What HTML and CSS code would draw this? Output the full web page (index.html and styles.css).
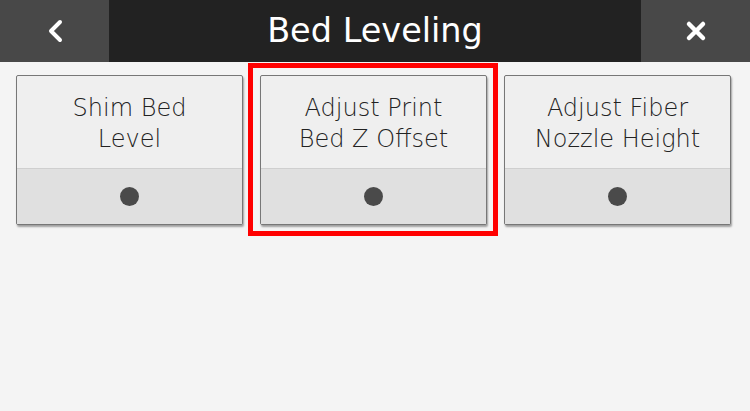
FILE: index.html
```html
<!DOCTYPE html>
<html lang="en">
<head>
    <meta charset="UTF-8">
    <meta name="viewport" content="width=device-width, initial-scale=1.0">
    <title>Bed Leveling</title>
    <link rel="stylesheet" href="styles.css">
</head>
<body>
<div class="header">
    <button type="button" class="header-button">
        <svg width="20" height="24" viewBox="0 0 20 24">
            <path d="M15 3 L6 12 L15 21" fill="none" stroke="#fff" stroke-width="4" stroke-linecap="round" stroke-linejoin="round"/>
        </svg>
    </button>
    <h1 class="title">Bed Leveling</h1>
    <button type="button" class="header-button">
        <svg width="22" height="22" viewBox="0 0 22 22">
            <path d="M4 4 L18 18 M18 4 L4 18" fill="none" stroke="#fff" stroke-width="4.5" stroke-linecap="round"/>
        </svg>
    </button>
</div>

<div class="menu">
    <div class="card">
        <div class="card-label">Shim Bed<br>Level</div>
        <div class="card-status"><span class="dot"></span></div>
    </div>
    <div class="card selected">
        <div class="card-label">Adjust Print<br>Bed Z Offset</div>
        <div class="card-status"><span class="dot"></span></div>
    </div>
    <div class="card">
        <div class="card-label">Adjust Fiber<br>Nozzle Height</div>
        <div class="card-status"><span class="dot"></span></div>
    </div>
</div>
</body>
</html>
```

FILE: styles.css
```css
/* Bed leveling menu */
body {
    font-family: "DejaVu Sans", sans-serif;
    background-color: #f4f4f4;
    margin: 0;
    padding: 0;
    width: 750px;
    height: 411px;
    overflow: hidden;
}
.header {
    display: flex;
    height: 62px;
    background-color: #222;
}
.header-button {
    width: 109px;
    height: 62px;
    border: none;
    padding: 0;
    background-color: #484848;
    display: flex;
    justify-content: center;
    align-items: center;
    cursor: pointer;
}
.title {
    flex: 1;
    margin: 0;
    color: #fff;
    font-size: 33.5px;
    font-weight: normal;
    line-height: 62px;
    text-align: center;
}
.menu {
    display: grid;
    grid-template-columns: repeat(3, 227px);
    column-gap: 17px;
    padding: 13px 19px 0 16px;
}
.card {
    height: 150px;
    box-sizing: border-box;
    border: 1px solid #777;
    border-radius: 2px;
    box-shadow: 1px 2px 2px rgba(0, 0, 0, 0.35);
    background-color: #efefef;
    display: flex;
    flex-direction: column;
}
.card.selected {
    position: relative;
}
/* red focus frame drawn over the page around the chosen card */
.card.selected::after {
    content: "";
    position: absolute;
    top: -13px;
    left: -13px;
    right: -12px;
    bottom: -12px;
    border: 5px solid #f00;
}
.card-label {
    height: 93px;
    box-sizing: border-box;
    padding-top: 3px;
    display: flex;
    justify-content: center;
    align-items: center;
    text-align: center;
    color: #222;
    font-size: 24px;
    font-weight: 200;
    line-height: 31px;
    border-bottom: 1px solid #cfcfcf;
}
.card-status {
    flex: 1;
    background-color: #e0e0e0;
    display: flex;
    justify-content: center;
    align-items: center;
}
.dot {
    width: 19px;
    height: 19px;
    border-radius: 50%;
    background-color: #4a4a4a;
}
```
